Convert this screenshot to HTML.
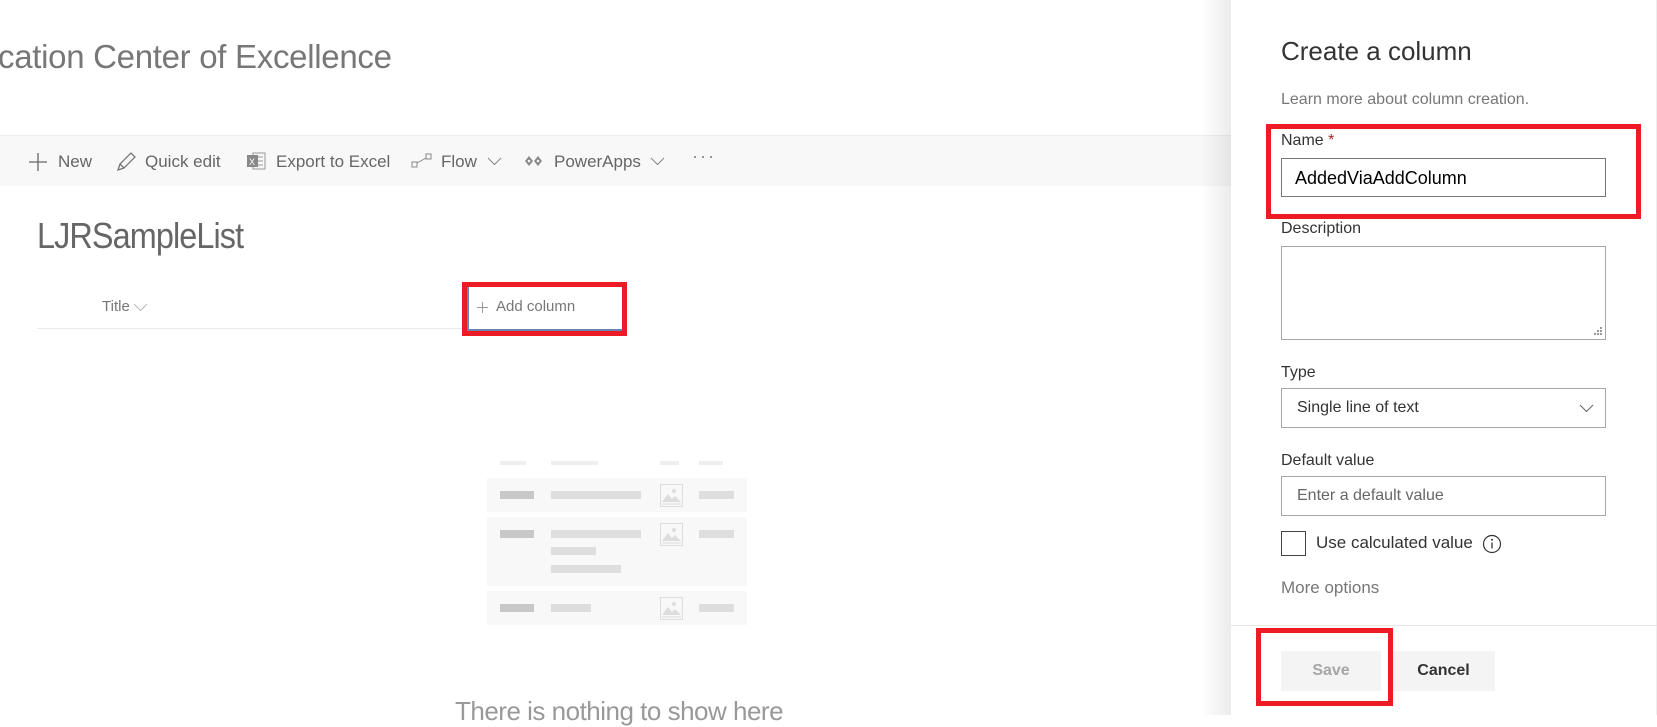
<!DOCTYPE html>
<html><head><meta charset="utf-8"><style>
*{margin:0;padding:0;box-sizing:border-box}
body{width:1657px;height:715px;overflow:hidden;background:#fff;font-family:"Liberation Sans",sans-serif;position:relative;color:#333}
.a{position:absolute;white-space:nowrap}
.tb{color:#666;font-size:17px}
.bar{position:absolute;height:8px}
.d{background:#c8c8c8}.l{background:#dedede}
.row{position:absolute;left:487px;width:260px;background:#f8f8f8}
.lbl{position:absolute;left:1281px;font-size:16px;color:#333}
.box{position:absolute;left:1281px;width:325px;border:1px solid #a6a6a6;background:#fff}
.red{position:absolute;border:5px solid #ed1c24}
</style></head><body>
<div class="a" style="left:-2px;top:38px;font-size:33px;color:#777;font-weight:300;letter-spacing:-0.3px">cation Center of Excellence</div>

<div class="a" style="left:0;top:135px;width:1231px;height:51px;background:#f8f8f8;border-top:1px solid #eee"></div>
<svg class="a" style="left:28px;top:152px" width="20" height="20"><path d="M10 1v18M1 10h18" stroke="#666" stroke-width="1.3"/></svg>
<div class="a tb" style="left:58px;top:152px">New</div>
<svg class="a" style="left:115px;top:151px" width="22" height="22"><path d="M3 19l2-6L16 2l4 4L9 17z M5 13l4 4" stroke="#777" fill="none" stroke-width="1.3"/></svg>
<div class="a tb" style="left:145px;top:152px">Quick edit</div>
<svg class="a" style="left:246px;top:151px" width="20" height="20"><rect x="7" y="2" width="12" height="16" fill="none" stroke="#999"/><path d="M10 6h7M10 10h7M10 14h7" stroke="#999"/><rect x="1" y="4" width="11" height="12" fill="#888"/><text x="3" y="14" font-size="9" fill="#fff" font-family="Liberation Sans">X</text></svg>
<div class="a tb" style="left:276px;top:152px">Export to Excel</div>
<svg class="a" style="left:411px;top:153px" width="22" height="16"><rect x="1" y="9" width="5" height="5" fill="none" stroke="#888"/><rect x="15" y="1" width="5" height="5" fill="none" stroke="#888"/><path d="M6 10L15 5" stroke="#888"/></svg>
<div class="a tb" style="left:441px;top:152px">Flow</div>
<svg class="a" style="left:487px;top:157px" width="15" height="9"><path d="M1 1l6.5 6.5L14 1" stroke="#888" fill="none"/></svg>
<svg class="a" style="left:525px;top:155px" width="18" height="12"><path d="M4 1l4 5-4 5-4-5zM13 1l4 5-4 5-4-5z" fill="#888"/><circle cx="4" cy="6" r="1.3" fill="#f8f8f8"/><circle cx="13" cy="6" r="1.3" fill="#f8f8f8"/></svg>
<div class="a tb" style="left:554px;top:152px">PowerApps</div>
<svg class="a" style="left:650px;top:157px" width="15" height="9"><path d="M1 1l6.5 6.5L14 1" stroke="#888" fill="none"/></svg>
<div class="a" style="left:692px;top:146px;font-size:18px;color:#888;letter-spacing:2px">···</div>

<div class="a" style="left:37px;top:215px;font-size:36px;color:#666;font-weight:300;letter-spacing:-1px;transform:scaleX(0.9);transform-origin:left">LJRSampleList</div>
<div class="a" style="left:102px;top:298px;font-size:15px;color:#777">Title</div>
<svg class="a" style="left:133px;top:303px" width="15" height="9"><path d="M1 1l6.5 6.5L14 1" stroke="#bbb" fill="none"/></svg>
<div class="a" style="left:37px;top:328px;width:430px;height:1px;background:#eaeaea"></div>
<div class="a" style="left:467px;top:287px;width:155px;height:44px;border-left:2px solid #6b84b0;border-bottom:2px solid #6b84b0"></div>
<svg class="a" style="left:477px;top:302px" width="11" height="11"><path d="M5.5 0v11M0 5.5h11" stroke="#999"/></svg>
<div class="a" style="left:496px;top:298px;font-size:15px;color:#777">Add column</div>
<div class="red" style="left:462px;top:282px;width:165px;height:54px"></div>

<div class="bar" style="left:500px;top:461px;width:26px;height:4px;background:#efefef"></div>
<div class="bar" style="left:551px;top:461px;width:47px;height:4px;background:#efefef"></div>
<div class="bar" style="left:660px;top:461px;width:19px;height:4px;background:#efefef"></div>
<div class="bar" style="left:699px;top:461px;width:24px;height:4px;background:#efefef"></div>
<div class="row" style="top:478px;height:34px"></div>
<div class="row" style="top:517px;height:69px"></div>
<div class="row" style="top:591px;height:34px"></div>
<div class="bar d" style="left:500px;top:491px;width:34px"></div>
<div class="bar l" style="left:551px;top:491px;width:90px"></div>
<div class="bar l" style="left:699px;top:491px;width:35px"></div>
<div class="bar d" style="left:500px;top:530px;width:34px"></div>
<div class="bar l" style="left:551px;top:530px;width:90px"></div>
<div class="bar l" style="left:551px;top:547px;width:45px"></div>
<div class="bar l" style="left:551px;top:565px;width:70px"></div>
<div class="bar l" style="left:699px;top:530px;width:35px"></div>
<div class="bar d" style="left:500px;top:604px;width:34px"></div>
<div class="bar l" style="left:551px;top:604px;width:40px"></div>
<div class="bar l" style="left:699px;top:604px;width:35px"></div>
<svg class="a" style="left:660px;top:484px" width="23" height="23"><rect x="0.5" y="0.5" width="22" height="22" fill="none" stroke="#ddd"/><path d="M2 18l6-8 4 5 3-3 6 6z" fill="#ddd"/><circle cx="14" cy="7" r="2" fill="#ddd"/><path d="M2 20h19" stroke="#ddd"/></svg>
<svg class="a" style="left:660px;top:523px" width="23" height="23"><rect x="0.5" y="0.5" width="22" height="22" fill="none" stroke="#ddd"/><path d="M2 18l6-8 4 5 3-3 6 6z" fill="#ddd"/><circle cx="14" cy="7" r="2" fill="#ddd"/><path d="M2 20h19" stroke="#ddd"/></svg>
<svg class="a" style="left:660px;top:597px" width="23" height="23"><rect x="0.5" y="0.5" width="22" height="22" fill="none" stroke="#ddd"/><path d="M2 18l6-8 4 5 3-3 6 6z" fill="#ddd"/><circle cx="14" cy="7" r="2" fill="#ddd"/><path d="M2 20h19" stroke="#ddd"/></svg>
<div class="a" style="left:455px;top:696px;font-size:26px;color:#999;font-weight:300;letter-spacing:-0.5px">There is nothing to show here</div>

<div class="a" style="left:1201px;top:0;width:30px;height:715px;background:linear-gradient(to right,rgba(0,0,0,0),rgba(0,0,0,0.08))"></div>
<div class="a" style="left:1231px;top:0;width:426px;height:715px;background:#fff;border-right:1px solid #eee"></div>
<div class="a" style="left:1281px;top:36px;font-size:26px;color:#333;font-weight:300">Create a column</div>
<div class="a" style="left:1281px;top:91px;font-size:16px;color:#777">Learn more about column creation.</div>
<div class="lbl" style="top:132px">Name <span style="color:#a4262c">*</span></div>
<div class="box" style="top:158px;height:39px;border-color:#777"><div class="a" style="left:13px;top:9px;font-size:18px;color:#000">AddedViaAddColumn</div></div>
<div class="red" style="left:1266px;top:124px;width:375px;height:95px"></div>
<div class="lbl" style="top:220px">Description</div>
<div class="box" style="top:246px;height:94px"><svg class="a" style="right:2px;bottom:2px" width="12" height="12"><path d="M9 2h2v2H9zM9 5h2v2H9zM6 5h2v2H6zM9 8h2v2H9zM6 8h2v2H6zM3 8h2v2H3z" fill="#999"/></svg></div>
<div class="lbl" style="top:364px">Type</div>
<div class="box" style="top:388px;height:40px"><div class="a" style="left:15px;top:10px;font-size:16px;color:#333">Single line of text</div><svg class="a" style="left:297px;top:15px" width="15" height="9"><path d="M1 1l6.5 6.5L14 1" stroke="#666" fill="none"/></svg></div>
<div class="lbl" style="top:452px">Default value</div>
<div class="box" style="top:476px;height:40px"><div class="a" style="left:15px;top:10px;font-size:16px;color:#666">Enter a default value</div></div>
<div class="a" style="left:1281px;top:531px;width:25px;height:25px;border:1px solid #444"></div>
<div class="a" style="left:1316px;top:533px;font-size:17px;color:#333">Use calculated value</div>
<svg class="a" style="left:1482px;top:534px" width="20" height="20"><circle cx="10" cy="10" r="8.5" fill="none" stroke="#333" stroke-width="1.2"/><path d="M10 8.5v6" stroke="#333" stroke-width="1.3"/><circle cx="10" cy="5.8" r="1" fill="#333"/></svg>
<div class="a" style="left:1281px;top:578px;font-size:17px;color:#777">More options</div>
<div class="a" style="left:1231px;top:625px;width:426px;height:1px;background:#e6e6e6"></div>
<div class="a" style="left:1281px;top:651px;width:100px;height:40px;background:#f4f4f4;color:#a6a6a6;font-size:16px;font-weight:bold;text-align:center;line-height:40px">Save</div>
<div class="a" style="left:1392px;top:651px;width:103px;height:40px;background:#f4f4f4;color:#333;font-size:16px;font-weight:bold;text-align:center;line-height:40px">Cancel</div>
<div class="red" style="left:1256px;top:628px;width:137px;height:78px"></div>
</body></html>
